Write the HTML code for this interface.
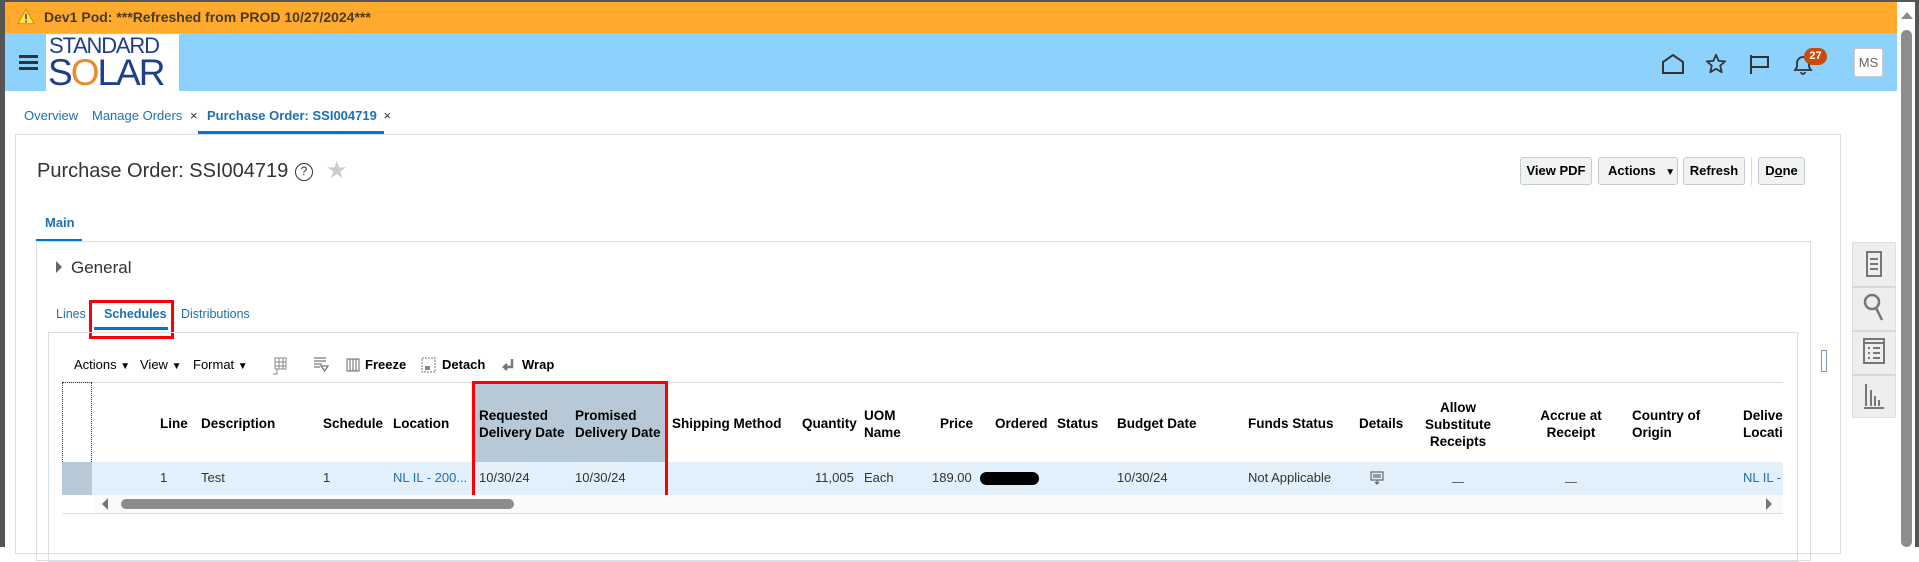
<!DOCTYPE html>
<html><head><meta charset="utf-8"><style>
*{margin:0;padding:0;box-sizing:border-box}
body{width:1919px;height:547px;overflow:hidden;background:#fff;font-family:"Liberation Sans",sans-serif;position:relative;color:#333}
.a{position:absolute}
.hd{position:absolute;font-weight:bold;font-size:13.5px;color:#000;line-height:17px}
.td{position:absolute;font-size:13px;color:#333;top:470px}
.btn{position:absolute;top:157px;height:28px;background:#f1f3f3;border:1px solid #c5ccd3;border-radius:3px;font-weight:bold;font-size:13px;color:#000;line-height:26px;text-align:center}
.tb{position:absolute;top:357px;font-size:13px;color:#000}
</style></head><body>
<div class="a" style="left:0;top:0;width:1919px;height:2px;background:#555"></div>
<div class="a" style="left:0;top:0;width:5px;height:547px;background:#555"></div>
<div class="a" style="left:1915px;top:0;width:4px;height:547px;background:#555"></div>
<div class="a" style="left:5px;top:2px;width:1892px;height:31px;background:#ffa92d"></div>
<svg class="a" style="left:17px;top:8px" width="18" height="17" viewBox="0 0 20 18"><path d="M10 1 L19 17 H1 Z" fill="#ffe14d" stroke="#c98a00" stroke-width="1"/><rect x="9" y="6" width="2" height="6" fill="#555"/><rect x="9" y="13.5" width="2" height="2" fill="#555"/></svg>
<div class="a" style="left:44px;top:9px;font-size:14px;color:#4a3a20;font-weight:bold">Dev1 Pod: ***Refreshed from PROD 10/27/2024***</div>
<div class="a" style="left:5px;top:33px;width:1892px;height:58px;background:#8dd2fd"></div>
<div class="a" style="left:19px;top:55px;width:19px;height:2.5px;background:#333;box-shadow:0 6px 0 #333,0 12px 0 #333"></div>
<div class="a" style="left:46px;top:34px;width:133px;height:57px;background:#fff"></div>
<div class="a" style="left:49px;top:35px;font-size:22px;color:#1d3e8a;letter-spacing:-1.2px;line-height:22px">STANDARD</div>
<div class="a" style="left:48px;top:55px;font-size:37px;color:#1d3e8a;letter-spacing:-2px;line-height:36px">S<span style="color:#e88b2a">O</span>LAR</div>
<svg class="a" style="left:1662px;top:54px" width="22" height="20" viewBox="0 0 22 20"><path d="M1 19 V8 L11 1 L21 8 V19 Z" fill="none" stroke="#333" stroke-width="2"/></svg>
<svg class="a" style="left:1705px;top:53px" width="22" height="21" viewBox="0 0 24 24"><path d="M12 2 L15 9 L22.5 9.5 L16.8 14.5 L18.6 22 L12 18 L5.4 22 L7.2 14.5 L1.5 9.5 L9 9 Z" fill="none" stroke="#333" stroke-width="2" stroke-linejoin="round"/></svg>
<svg class="a" style="left:1749px;top:54px" width="21" height="20" viewBox="0 0 21 20"><path d="M2 1 V20 M2 3 H19 V13 H2" fill="none" stroke="#333" stroke-width="2"/></svg>
<svg class="a" style="left:1792px;top:54px" width="22" height="21" viewBox="0 0 22 21"><path d="M3 16 H19 L17 13 V9 A6 6 0 0 0 5 9 V13 Z M9 18 A2 2 0 0 0 13 18" fill="none" stroke="#333" stroke-width="1.8"/></svg>
<div class="a" style="left:1804px;top:48px;width:23px;height:17px;border-radius:9px;background:#c94a0a;color:#fff;font-size:11px;font-weight:bold;text-align:center;line-height:17px">27</div>
<div class="a" style="left:1854px;top:48px;width:29px;height:29px;background:#fff;border:1px solid #ccc;border-radius:3px;font-size:13px;color:#666;text-align:center;line-height:27px">MS</div>
<div class="a" style="left:1899px;top:2px;width:16px;height:545px;background:#fff"></div>
<svg class="a" style="left:1900px;top:10px" width="14" height="10"><path d="M1 9 L7 2 L13 9 Z" fill="#8a8a8a"/></svg>
<div class="a" style="left:1901px;top:30px;width:11px;height:517px;background:#8d8d8d;border-radius:6px"></div>
<div class="a" style="left:24px;top:108px;font-size:13px;color:#1f6fb2">Overview</div>
<div class="a" style="left:92px;top:108px;font-size:13px;color:#1f6fb2">Manage Orders <span style="color:#333;margin-left:4px">×</span></div>
<div class="a" style="left:207px;top:108px;font-size:13px;color:#1f6fb2;font-weight:bold">Purchase Order: SSI004719 <span style="color:#333;margin-left:3px;font-weight:normal">×</span></div>
<div class="a" style="left:198px;top:131px;width:186px;height:3px;background:#0572ce"></div>
<div class="a" style="left:15px;top:134px;width:1826px;height:420px;border:1px solid #d6dfe6"></div>
<div class="a" style="left:37px;top:160px;font-size:20px;color:#333">Purchase Order: SSI004719</div>
<div class="a" style="left:295px;top:163px;width:18px;height:18px;border:1.6px solid #333;border-radius:50%;font-size:12px;text-align:center;line-height:15px;color:#333">?</div>
<div class="a" style="left:326px;top:156px;font-size:24px;color:#ccc">★</div>
<div class="btn" style="left:1520px;width:72px">View PDF</div>
<div class="btn" style="left:1598px;width:80px;text-align:left;padding-left:9px">Actions <span style="font-size:10px;margin-left:6px">▼</span></div>
<div class="btn" style="left:1683px;width:62px">Refresh</div>
<div class="a" style="left:1751px;top:157px;width:1px;height:28px;background:#d6dfe6"></div>
<div class="btn" style="left:1758px;width:47px">D<u>o</u>ne</div>
<div class="a" style="left:45px;top:215px;font-size:13px;color:#1f6fb2;font-weight:bold">Main</div>
<div class="a" style="left:36px;top:239px;width:46px;height:3px;background:#0572ce"></div>
<div class="a" style="left:36px;top:241px;width:1775px;height:320px;border:1px solid #d6dfe6"></div>
<svg class="a" style="left:55px;top:260px" width="8" height="14"><path d="M1 1 L7 7 L1 13 Z" fill="#666"/></svg>
<div class="a" style="left:71px;top:258px;font-size:17px;color:#333">General</div>
<div class="a" style="left:56px;top:307px;font-size:12.5px;color:#1f6fb2">Lines</div>
<div class="a" style="left:104px;top:307px;font-size:12.5px;color:#1f6fb2;font-weight:bold">Schedules</div>
<div class="a" style="left:181px;top:307px;font-size:12.5px;color:#1f6fb2">Distributions</div>
<div class="a" style="left:94px;top:327px;width:74px;height:3px;background:#0572ce"></div>
<div class="a" style="left:89px;top:300px;width:85px;height:39px;border:3px solid #f00"></div>
<div class="a" style="left:48px;top:332px;width:1750px;height:230px;border:1px solid #d6dfe6"></div>
<div class="tb" style="left:74px">Actions <span style="font-size:10px">▼</span></div>
<div class="tb" style="left:140px">View <span style="font-size:10px">▼</span></div>
<div class="tb" style="left:193px">Format <span style="font-size:10px">▼</span></div>
<svg class="a" style="left:272px;top:357px" width="16" height="18"><path d="M3 1 H14 V12 H3 Z M3 5 H14 M3 9 H14 M7 1 V12 M11 1 V12 M5 12 V17 H1" fill="none" stroke="#888" stroke-width="1"/></svg>
<svg class="a" style="left:313px;top:357px" width="16" height="16"><path d="M1 1 H13 M1 4 H13 M1 7 H9 M1 10 H7 M8 9 L15 9 L11.5 14 Z" fill="none" stroke="#777" stroke-width="1.3"/></svg>
<svg class="a" style="left:346px;top:358px" width="14" height="14"><path d="M1 1 H13 V13 H1 Z M4 1 V13 M7 1 V13 M10 1 V13" fill="none" stroke="#666" stroke-width="1"/></svg>
<div class="tb" style="left:365px;font-weight:bold">Freeze</div>
<svg class="a" style="left:421px;top:357px" width="15" height="16"><path d="M1 1 H14 V15 H1 Z" fill="none" stroke="#777" stroke-dasharray="2 1"/><rect x="4" y="9" width="5" height="4" fill="#888"/></svg>
<div class="tb" style="left:442px;font-weight:bold">Detach</div>
<svg class="a" style="left:502px;top:358px" width="14" height="14"><path d="M10 1 V9 H2 M5 6 L2 9 L5 12" fill="none" stroke="#777" stroke-width="2.5"/></svg>
<div class="tb" style="left:522px;font-weight:bold">Wrap</div>
<div class="a" style="left:62px;top:382px;width:1721px;height:1px;background:#d6dfe6"></div>
<div class="a" style="left:62px;top:382px;width:30px;height:80px;border-left:1px dotted #333;border-right:1px dotted #333;border-top:1px dotted #333"></div>
<div class="a" style="left:474px;top:383px;width:192px;height:79px;background:#b7c9d6"></div>
<div class="a" style="left:62px;top:462px;width:1721px;height:33px;background:#e2f0fb"></div>
<div class="a" style="left:62px;top:462px;width:30px;height:33px;background:#b7c9d6"></div>
<div class="hd" style="left:160px;top:415px">Line</div>
<div class="hd" style="left:201px;top:415px">Description</div>
<div class="hd" style="left:323px;top:415px">Schedule</div>
<div class="hd" style="left:393px;top:415px">Location</div>
<div class="hd" style="left:479px;top:407px">Requested<br>Delivery Date</div>
<div class="hd" style="left:575px;top:407px">Promised<br>Delivery Date</div>
<div class="hd" style="left:672px;top:415px">Shipping Method</div>
<div class="hd" style="left:802px;top:415px">Quantity</div>
<div class="hd" style="left:864px;top:407px">UOM<br>Name</div>
<div class="hd" style="left:940px;top:415px">Price</div>
<div class="hd" style="left:995px;top:415px">Ordered</div>
<div class="hd" style="left:1057px;top:415px">Status</div>
<div class="hd" style="left:1117px;top:415px">Budget Date</div>
<div class="hd" style="left:1248px;top:415px">Funds Status</div>
<div class="hd" style="left:1359px;top:415px">Details</div>
<div class="hd" style="left:1408px;top:399px;width:100px;text-align:center">Allow<br>Substitute<br>Receipts</div>
<div class="hd" style="left:1521px;top:407px;width:100px;text-align:center">Accrue at<br>Receipt</div>
<div class="hd" style="left:1632px;top:407px">Country of<br>Origin</div>
<div class="hd" style="left:1743px;top:407px;width:40px;overflow:hidden;white-space:nowrap">Delivery<br>Location</div>
<div class="td" style="left:160px">1</div>
<div class="td" style="left:201px">Test</div>
<div class="td" style="left:323px">1</div>
<div class="td" style="left:393px;color:#1f6fb2">NL IL - 200...</div>
<div class="td" style="left:479px">10/30/24</div>
<div class="td" style="left:575px">10/30/24</div>
<div class="td" style="left:815px">11,005</div>
<div class="td" style="left:864px">Each</div>
<div class="td" style="left:932px">189.00</div>
<div class="a" style="left:980px;top:472px;width:59px;height:13px;background:#000;border-radius:7px"></div>
<div class="td" style="left:1117px">10/30/24</div>
<div class="td" style="left:1248px">Not Applicable</div>
<svg class="a" style="left:1370px;top:471px" width="14" height="14"><path d="M1 1 H13 V9 H1 Z M3 4 H11 M3 6 H11 M7 9 V13 M5 11 L7 13 L9 11" fill="none" stroke="#666" stroke-width="1.2"/></svg>
<div class="a" style="left:1452px;top:482px;width:12px;height:1px;background:#666"></div>
<div class="a" style="left:1565px;top:482px;width:12px;height:1px;background:#666"></div>
<div class="td" style="left:1743px;color:#1f6fb2;width:40px;overflow:hidden;white-space:nowrap">NL IL - 2</div>
<div class="a" style="left:472px;top:381px;width:196px;height:118px;border:3px solid #f00"></div>
<div class="a" style="left:95px;top:495px;width:1688px;height:18px;background:#fafafa"></div>
<svg class="a" style="left:101px;top:498px" width="8" height="12"><path d="M7 0 L1 6 L7 12 Z" fill="#777"/></svg>
<div class="a" style="left:121px;top:499px;width:393px;height:10px;background:#8c8c8c;border-radius:5px"></div>
<svg class="a" style="left:1765px;top:498px" width="8" height="12"><path d="M1 0 L7 6 L1 12 Z" fill="#777"/></svg>
<div class="a" style="left:62px;top:513px;width:1721px;height:1px;background:#d6dfe6"></div>
<div class="a" style="left:1821px;top:350px;width:6px;height:22px;border:1px solid #7a9cc0;background:#fff"></div>
<div class="a" style="left:1852px;top:242px;width:44px;height:176px;background:#eeeeee;border:1px solid #e0e0e0"></div>
<div class="a" style="left:1852px;top:286px;width:44px;height:2px;background:#d8d8d8"></div>
<div class="a" style="left:1852px;top:330px;width:44px;height:2px;background:#d8d8d8"></div>
<div class="a" style="left:1852px;top:374px;width:44px;height:2px;background:#d8d8d8"></div>
<svg class="a" style="left:1865px;top:251px" width="18" height="26"><path d="M2 1 H16 V25 H2 Z M5 8 H13 M5 13 H13 M5 18 H13" fill="none" stroke="#777" stroke-width="2"/></svg>
<svg class="a" style="left:1863px;top:292px" width="22" height="32"><circle cx="9" cy="10" r="7" fill="none" stroke="#777" stroke-width="2.5"/><path d="M13 16 L19 28" stroke="#777" stroke-width="2.5"/></svg>
<svg class="a" style="left:1862px;top:337px" width="24" height="28"><path d="M2 2 H22 V26 H2 Z M2 6 H22 M6 11 H8 M11 11 H18 M6 16 H8 M11 16 H18 M6 21 H8 M11 21 H18" fill="none" stroke="#777" stroke-width="2"/></svg>
<svg class="a" style="left:1862px;top:382px" width="24" height="28"><path d="M4 2 V24 M9 8 V24 M13 14 V24 M17 18 V24 M2 26 H22" fill="none" stroke="#777" stroke-width="2"/></svg>
</body></html>
